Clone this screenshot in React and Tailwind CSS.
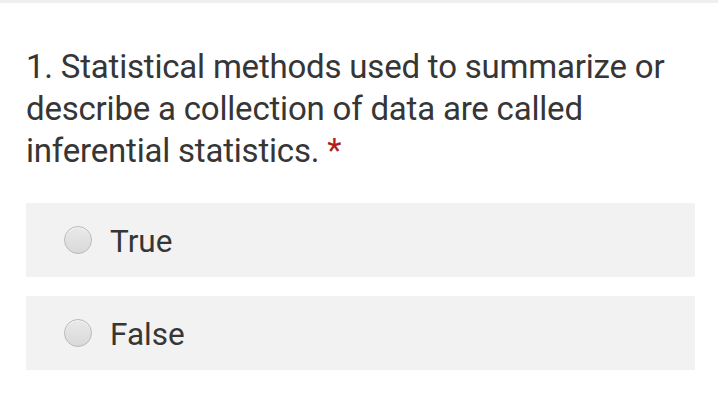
import React from "react";

const options = ["True", "False"];

function Radio() {
  return (
    <span className="block w-[28px] h-[28px] rounded-full border border-[#b9b9b9] bg-gradient-to-b from-[#e9e9e9] to-[#d9d9d9] shadow-[inset_0_1px_1px_rgba(255,255,255,0.7)]" />
  );
}

export default function App() {
  return (
    <div
      className="w-[718px] h-[419px] bg-white overflow-hidden text-[#363636]"
      style={{ fontFamily: "Roboto, 'Liberation Sans', sans-serif" }}
    >
      <div className="h-[3px] bg-[#efefef]" />
      <div className="pl-[26px] pr-[23px] pt-[43px]">
        {/* Question */}
        <p className="text-[33px] leading-[42px] tracking-[-0.2px]">
          1. Statistical methods used to summarize or describe a collection of data are called
          inferential statistics. <span className="text-[#b0201b]">*</span>
        </p>

        {/* Options */}
        <div className="mt-[31px] flex flex-col gap-[19px]">
          {options.map((opt) => (
            <label
              key={opt}
              className="h-[74px] bg-[#f2f2f2] flex items-center pl-[38px] gap-[18px] cursor-pointer"
            >
              <Radio />
              <span className="text-[31.5px] leading-none pt-[3px]">{opt}</span>
            </label>
          ))}
        </div>
      </div>
    </div>
  );
}
